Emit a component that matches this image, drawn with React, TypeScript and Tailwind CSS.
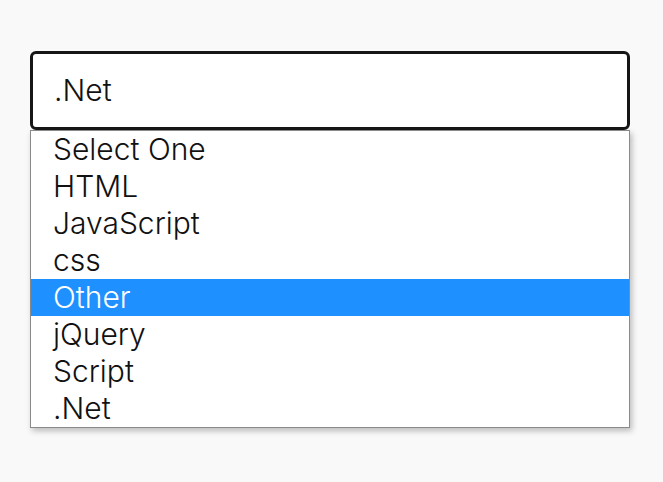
import React from "react";

const options = ["Select One", "HTML", "JavaScript", "css", "Other", "jQuery", "Script", ".Net"];

export default function App() {
    const highlighted = "Other";
    return (
        <div
            className="min-h-[482px] w-full bg-[#f9f9f9] pt-[51px] pl-[30px]"
            style={{ fontFamily: "Inter, 'Noto Sans', sans-serif" }}
        >
            <div className="w-[600px]">
                {/* selected value */}
                <div className="flex h-[79px] items-center rounded-[6px] border-[3px] border-[#161616] bg-white pl-[21px] text-[30px] font-light text-[#111]">
                    .Net
                </div>
                {/* open list */}
                <ul className="border border-[#8a8a8a] bg-white shadow-[2px_3px_6px_rgba(0,0,0,0.25)]">
                    {options.map((o) => (
                        <li
                            key={o}
                            className={`flex h-[37px] items-center pl-[22px] text-[30px] font-light ${
                                o === highlighted ? "bg-[#1e90ff] text-white" : "text-[#111]"
                            }`}
                        >
                            {o}
                        </li>
                    ))}
                </ul>
            </div>
        </div>
    );
}
